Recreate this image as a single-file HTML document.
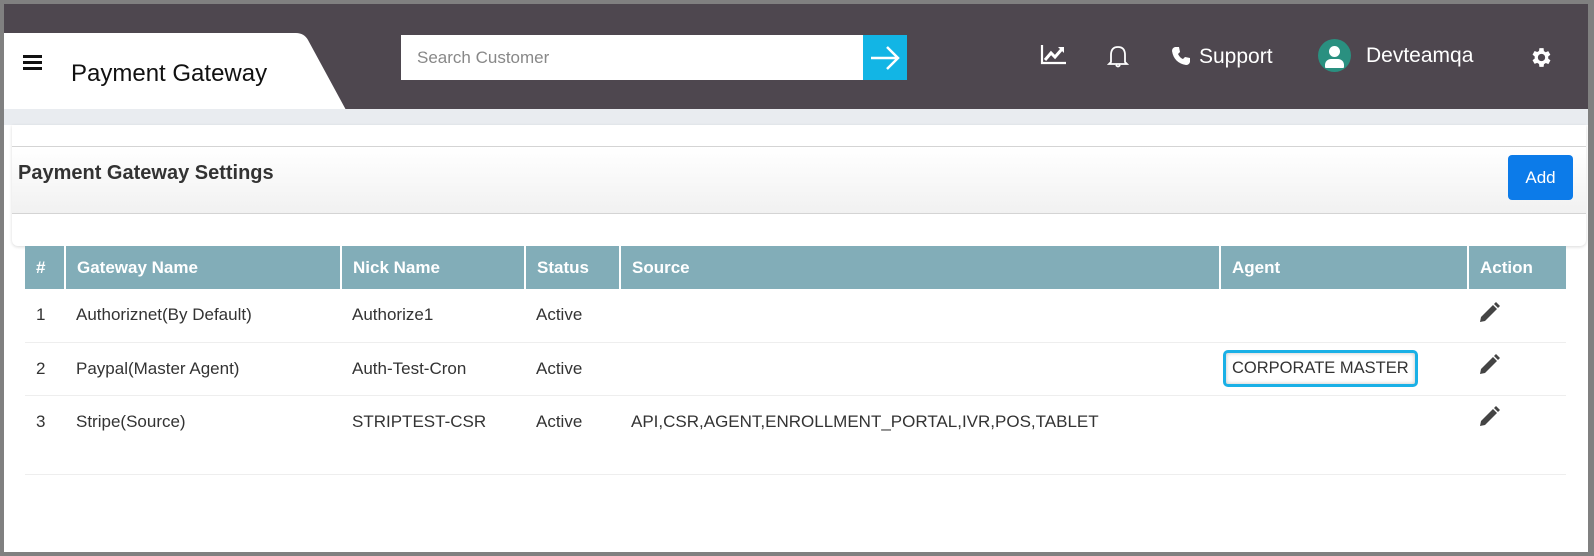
<!DOCTYPE html>
<html><head><meta charset="utf-8"><style>
*{box-sizing:border-box;margin:0;padding:0}
body{width:1594px;height:556px;overflow:hidden;background:#808080;font-family:"Liberation Sans",sans-serif;position:relative}
#main{position:absolute;left:4px;top:4px;width:1584px;height:548px;background:#fff;overflow:hidden}
.hdr{position:absolute;left:0;top:0;width:1584px;height:105px;background:#4e474f}
.band{position:absolute;left:0;top:105px;width:1584px;height:16px;background:#e9ecf0}
.abs{position:absolute}
.card{position:absolute;left:8px;top:121px;width:1574px;height:121px;background:#fff;border-radius:0 0 6px 6px;box-shadow:0 1px 3px rgba(0,0,0,.15)}
.ph{position:absolute;left:0;top:21px;width:1574px;height:68px;border-top:1px solid #d4d4d4;border-bottom:1px solid #d4d4d4;background:linear-gradient(#fff,#f1f1f1)}
table{position:absolute;left:21px;top:242px;border-collapse:collapse;width:1541px;font-size:17px;color:#333}
th{background:#82adb8;color:#fff;text-align:left;font-weight:bold;height:43px;padding:0 11px;border-left:2px solid #fff}
th:first-child{border-left:none}
td{height:53px;padding:0 11px;border-bottom:1px solid #eee}
</style></head><body>
<div id="main">
<div class="hdr"></div>
<svg class="abs" style="left:0;top:29px" width="345" height="77"><path d="M0 0 H292 Q300 0 304 7 L342 77 H0 Z" fill="#fff"/></svg>
<div class="abs" style="left:19px;top:51px;width:19px;height:3px;background:#111;box-shadow:0 6px 0 #111,0 12px 0 #111"></div>
<div class="abs" style="left:67px;top:56px;font-size:24px;color:#111">Payment Gateway</div>
<div class="abs" style="left:397px;top:31px;width:462px;height:45px;background:#fff"></div>
<div class="abs" style="left:413px;top:44px;font-size:17px;color:#888">Search Customer</div>
<div class="abs" style="left:859px;top:31px;width:44px;height:45px;background:#12b5e5"></div>
<svg class="abs" style="left:864px;top:40px" width="34" height="28"><path d="M3 14 H30 M19 3 L30 14 L19 25" stroke="#fff" stroke-width="2.5" fill="none"/></svg>
<svg class="abs" style="left:1036px;top:40px" width="28" height="22"><path d="M2 1 V19 H26" stroke="#fff" stroke-width="2.2" fill="none"/><path d="M5 16 L11 9 L15 13 L22 5" stroke="#fff" stroke-width="3" fill="none"/><path d="M18 3 H24 V9 Z" fill="#fff"/></svg>
<svg class="abs" style="left:1103px;top:40px" width="22" height="24"><path d="M4 18 V11 Q4 3 11 3 Q18 3 18 11 V18 L20 20 H2 Z M9 21 Q11 24 13 21" stroke="#fff" stroke-width="1.8" fill="none"/></svg>
<svg class="abs" style="left:1167px;top:42px" width="20" height="20"><path d="M4 1 L8 1 L9 6 L7 8 Q9 12 12 13 L14 11 L19 12 L19 16 Q18 19 15 19 Q3 17 1 5 Q1 2 4 1 Z" fill="#fff"/></svg>
<div class="abs" style="left:1195px;top:41px;font-size:21px;color:#fff">Support</div>
<div class="abs" style="left:1314px;top:35px;width:33px;height:33px;border-radius:50%;background:#2a9080;overflow:hidden"><div class="abs" style="left:11px;top:7px;width:11px;height:11px;border-radius:50%;background:#fff"></div><div class="abs" style="left:7px;top:20px;width:19px;height:9px;border-radius:6px 6px 1px 1px;background:#fff"></div></div>
<div class="abs" style="left:1362px;top:40px;font-size:21px;color:#fff">Devteamqa</div>
<svg class="abs" style="left:1525px;top:41px" width="25" height="25" viewBox="0 0 24 24"><path fill="#fff" d="M19.4 13a7.5 7.5 0 000-2l2.1-1.6-2-3.5-2.5 1a7 7 0 00-1.7-1L15 3h-4l-.4 2.7a7 7 0 00-1.7 1l-2.5-1-2 3.5L6.5 11a7.5 7.5 0 000 2l-2.1 1.6 2 3.5 2.5-1a7 7 0 001.7 1L11 21h4l.4-2.7a7 7 0 001.7-1l2.5 1 2-3.5zM13 15.5A3.5 3.5 0 1113 8.5a3.5 3.5 0 010 7z" transform="translate(-1 0)"/></svg>
<div class="band"></div>
<div class="card"><div class="ph"></div></div>
<div class="abs" style="left:14px;top:158px;font-size:20px;font-weight:bold;color:#333">Payment Gateway Settings</div>
<div class="abs" style="left:1504px;top:151px;width:65px;height:45px;background:#0c7be9;border-radius:4px;color:#fff;font-size:17px;text-align:center;line-height:45px">Add</div>
<table>
<tr><th style="width:40px">#</th><th style="width:276px">Gateway Name</th><th style="width:184px">Nick Name</th><th style="width:95px">Status</th><th style="width:600px">Source</th><th style="width:248px">Agent</th><th>Action</th></tr>
<tr><td>1</td><td>Authoriznet(By Default)</td><td>Authorize1</td><td>Active</td><td></td><td></td><td class="pen"></td></tr>
<tr><td>2</td><td>Paypal(Master Agent)</td><td>Auth-Test-Cron</td><td>Active</td><td></td><td><span style="display:inline-block;margin-left:-8px;padding:6px 6px;border:3px solid #1ab0e6;border-radius:5px;font-size:16.5px;box-shadow:inset 0 0 4px rgba(0,0,0,.25)">CORPORATE MASTER</span></td><td></td></tr>
<tr><td style="height:79px;padding-bottom:26px">3</td><td style="padding-bottom:26px">Stripe(Source)</td><td style="padding-bottom:26px">STRIPTEST-CSR</td><td style="padding-bottom:26px">Active</td><td style="padding-bottom:26px">API,CSR,AGENT,ENROLLMENT_PORTAL,IVR,POS,TABLET</td><td></td><td></td></tr>
</table>
<svg class="abs" style="left:1474px;top:298px" width="22" height="22" viewBox="0 0 22 22"><path d="M2 20 L3 15 L15 3 L19 7 L7 19 Z M16 2 L18 0 L22 4 L20 6 Z" fill="#444"/></svg>
<svg class="abs" style="left:1474px;top:350px" width="22" height="22" viewBox="0 0 22 22"><path d="M2 20 L3 15 L15 3 L19 7 L7 19 Z M16 2 L18 0 L22 4 L20 6 Z" fill="#444"/></svg>
<svg class="abs" style="left:1474px;top:402px" width="22" height="22" viewBox="0 0 22 22"><path d="M2 20 L3 15 L15 3 L19 7 L7 19 Z M16 2 L18 0 L22 4 L20 6 Z" fill="#444"/></svg>
</div>
</body></html>
